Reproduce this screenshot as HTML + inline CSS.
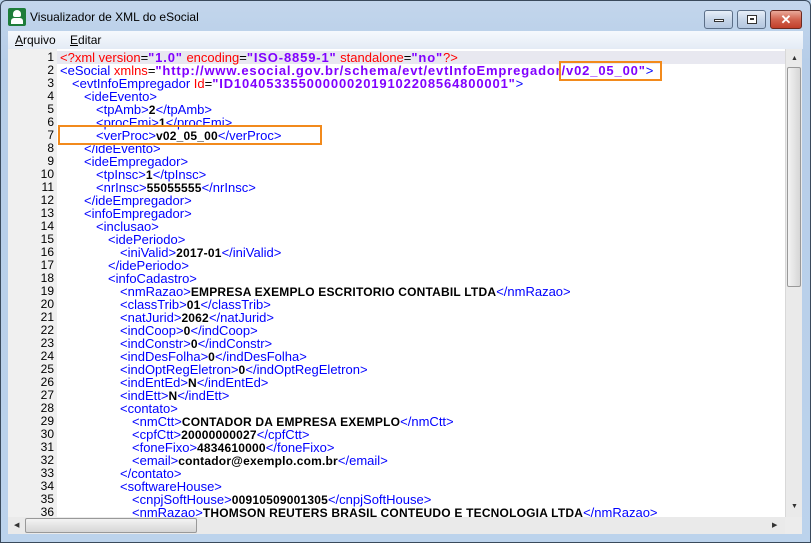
<!DOCTYPE html>
<html><head><meta charset="utf-8"><style>
*{margin:0;padding:0;box-sizing:border-box}
body{width:811px;height:543px;overflow:hidden;background:#b9d1ea;font-family:"Liberation Sans",Tahoma,sans-serif;position:relative}
.frame{position:absolute;left:0;top:0;width:811px;height:543px;background:linear-gradient(#c3d6ec,#b6cde8 60px,#bcd3ec);border:1px solid #3a4a5c;border-radius:6px 6px 0 0}
.title{position:absolute;left:30px;top:10px;font-size:12px;color:#000}
.icon{position:absolute;left:8px;top:8px;width:18px;height:18px;background:#1e7d3a;border-radius:2px}
.icon:before{content:"";position:absolute;left:5px;top:2px;width:8px;height:7px;background:#fff;border-radius:4px 4px 2px 2px}
.icon:after{content:"";position:absolute;left:3px;top:10px;width:12px;height:6px;background:#fff;border-radius:3px 3px 0 0}
.btn{position:absolute;top:10px;height:19px;border:1px solid #5c6f88;border-radius:3px;background:linear-gradient(#e6eef8,#c7d6e9 50%,#b3c6df)}
.close{background:linear-gradient(#e9a99a,#d2644f 50%,#c13f2a);border-color:#6d2a20;color:#fff;font-weight:bold;font-size:13px;text-align:center;line-height:17px}
.menu{position:absolute;left:8px;top:31px;width:795px;height:18px;background:linear-gradient(#f6f9fd,#e4ebf5);font-size:12px}
.menu span{position:absolute;top:2px}
.editor{position:absolute;left:8px;top:49px;width:777px;height:468px;background:#fff;overflow:hidden}
.gutter{position:absolute;left:0;top:0;width:49px;height:468px;background:#f0f0f0}
.cur{position:absolute;left:49px;top:2px;width:728px;height:13px;background:#e8e8f0}
.lines{position:absolute;left:0;top:2px;width:777px;font-size:13px;line-height:13px}
.ln{display:block;height:13px;position:relative;white-space:nowrap}
.n{position:absolute;left:0;width:46px;text-align:right;color:#000;font-size:12px}
.c{position:absolute;left:52px;white-space:pre}
.l1{left:64px}.l2{left:76px}.l3{left:88px}.l4{left:100px}.l5{left:112px}.l6{left:124px}
.t{color:#0000ff}.a{color:#ff0000}.v{color:#8000ff;font-weight:bold;letter-spacing:0.85px}.x{color:#000;font-weight:bold;font-size:12px;letter-spacing:0.2px}
.vs{position:absolute;left:785px;top:49px;width:17px;height:468px;background:#eaeaea;border-left:1px solid #d8d8d8}
.hs{position:absolute;left:8px;top:517px;width:777px;height:17px;background:#eaeaea}
.corner{position:absolute;left:785px;top:517px;width:17px;height:17px;background:#ececec}
.box{position:absolute;border:2px solid #f28a1c}
</style></head><body>
<div class="frame"></div>
<div class="icon"></div>
<div class="title">Visualizador de XML do eSocial</div>
<div class="btn" style="left:704px;width:29px"><div style="position:absolute;left:9px;top:8px;width:10px;height:3px;background:#fff;border:1px solid #333"></div></div>
<div class="btn" style="left:737px;width:29px"><div style="position:absolute;left:9px;top:4px;width:10px;height:9px;border:1px solid #333;background:#fff"><div style="margin:2px;height:2px;background:#333"></div></div></div>
<div class="btn close" style="left:770px;width:32px">✕</div>
<div class="menu"><span style="left:7px"><u>A</u>rquivo</span><span style="left:62px"><u>E</u>ditar</span></div>
<div class="editor">
<div class="gutter"></div>
<div class="cur"></div>
<div class="lines">
<div class="ln"><span class="n">1</span><span class="c"><span class="a">&lt;?xml version</span>=<span class="v">"1.0"</span> <span class="a">encoding</span>=<span class="v">"ISO-8859-1"</span> <span class="a">standalone</span>=<span class="v">"no"</span><span class="a">?&gt;</span></span></div>
<div class="ln"><span class="n">2</span><span class="c"><span class="t">&lt;eSocial</span> <span class="a">xmlns</span>=<span class="v">"http://www.esocial.gov.br/schema/evt/evtInfoEmpregador/v02_05_00"</span><span class="t">&gt;</span></span></div>
<div class="ln"><span class="n">3</span><span class="c l1"><span class="t">&lt;evtInfoEmpregador</span> <span class="a">Id</span>=<span class="v">"ID1040533550000002019102208564800001"</span><span class="t">&gt;</span></span></div>
<div class="ln"><span class="n">4</span><span class="c l2"><span class="t">&lt;ideEvento&gt;</span></span></div>
<div class="ln"><span class="n">5</span><span class="c l3"><span class="t">&lt;tpAmb&gt;</span><span class="x">2</span><span class="t">&lt;/tpAmb&gt;</span></span></div>
<div class="ln"><span class="n">6</span><span class="c l3"><span class="t">&lt;procEmi&gt;</span><span class="x">1</span><span class="t">&lt;/procEmi&gt;</span></span></div>
<div class="ln"><span class="n">7</span><span class="c l3"><span class="t">&lt;verProc&gt;</span><span class="x">v02_05_00</span><span class="t">&lt;/verProc&gt;</span></span></div>
<div class="ln"><span class="n">8</span><span class="c l2"><span class="t">&lt;/ideEvento&gt;</span></span></div>
<div class="ln"><span class="n">9</span><span class="c l2"><span class="t">&lt;ideEmpregador&gt;</span></span></div>
<div class="ln"><span class="n">10</span><span class="c l3"><span class="t">&lt;tpInsc&gt;</span><span class="x">1</span><span class="t">&lt;/tpInsc&gt;</span></span></div>
<div class="ln"><span class="n">11</span><span class="c l3"><span class="t">&lt;nrInsc&gt;</span><span class="x">55055555</span><span class="t">&lt;/nrInsc&gt;</span></span></div>
<div class="ln"><span class="n">12</span><span class="c l2"><span class="t">&lt;/ideEmpregador&gt;</span></span></div>
<div class="ln"><span class="n">13</span><span class="c l2"><span class="t">&lt;infoEmpregador&gt;</span></span></div>
<div class="ln"><span class="n">14</span><span class="c l3"><span class="t">&lt;inclusao&gt;</span></span></div>
<div class="ln"><span class="n">15</span><span class="c l4"><span class="t">&lt;idePeriodo&gt;</span></span></div>
<div class="ln"><span class="n">16</span><span class="c l5"><span class="t">&lt;iniValid&gt;</span><span class="x">2017-01</span><span class="t">&lt;/iniValid&gt;</span></span></div>
<div class="ln"><span class="n">17</span><span class="c l4"><span class="t">&lt;/idePeriodo&gt;</span></span></div>
<div class="ln"><span class="n">18</span><span class="c l4"><span class="t">&lt;infoCadastro&gt;</span></span></div>
<div class="ln"><span class="n">19</span><span class="c l5"><span class="t">&lt;nmRazao&gt;</span><span class="x">EMPRESA EXEMPLO ESCRITORIO CONTABIL LTDA</span><span class="t">&lt;/nmRazao&gt;</span></span></div>
<div class="ln"><span class="n">20</span><span class="c l5"><span class="t">&lt;classTrib&gt;</span><span class="x">01</span><span class="t">&lt;/classTrib&gt;</span></span></div>
<div class="ln"><span class="n">21</span><span class="c l5"><span class="t">&lt;natJurid&gt;</span><span class="x">2062</span><span class="t">&lt;/natJurid&gt;</span></span></div>
<div class="ln"><span class="n">22</span><span class="c l5"><span class="t">&lt;indCoop&gt;</span><span class="x">0</span><span class="t">&lt;/indCoop&gt;</span></span></div>
<div class="ln"><span class="n">23</span><span class="c l5"><span class="t">&lt;indConstr&gt;</span><span class="x">0</span><span class="t">&lt;/indConstr&gt;</span></span></div>
<div class="ln"><span class="n">24</span><span class="c l5"><span class="t">&lt;indDesFolha&gt;</span><span class="x">0</span><span class="t">&lt;/indDesFolha&gt;</span></span></div>
<div class="ln"><span class="n">25</span><span class="c l5"><span class="t">&lt;indOptRegEletron&gt;</span><span class="x">0</span><span class="t">&lt;/indOptRegEletron&gt;</span></span></div>
<div class="ln"><span class="n">26</span><span class="c l5"><span class="t">&lt;indEntEd&gt;</span><span class="x">N</span><span class="t">&lt;/indEntEd&gt;</span></span></div>
<div class="ln"><span class="n">27</span><span class="c l5"><span class="t">&lt;indEtt&gt;</span><span class="x">N</span><span class="t">&lt;/indEtt&gt;</span></span></div>
<div class="ln"><span class="n">28</span><span class="c l5"><span class="t">&lt;contato&gt;</span></span></div>
<div class="ln"><span class="n">29</span><span class="c l6"><span class="t">&lt;nmCtt&gt;</span><span class="x">CONTADOR DA EMPRESA EXEMPLO</span><span class="t">&lt;/nmCtt&gt;</span></span></div>
<div class="ln"><span class="n">30</span><span class="c l6"><span class="t">&lt;cpfCtt&gt;</span><span class="x">20000000027</span><span class="t">&lt;/cpfCtt&gt;</span></span></div>
<div class="ln"><span class="n">31</span><span class="c l6"><span class="t">&lt;foneFixo&gt;</span><span class="x">4834610000</span><span class="t">&lt;/foneFixo&gt;</span></span></div>
<div class="ln"><span class="n">32</span><span class="c l6"><span class="t">&lt;email&gt;</span><span class="x">contador@exemplo.com.br</span><span class="t">&lt;/email&gt;</span></span></div>
<div class="ln"><span class="n">33</span><span class="c l5"><span class="t">&lt;/contato&gt;</span></span></div>
<div class="ln"><span class="n">34</span><span class="c l5"><span class="t">&lt;softwareHouse&gt;</span></span></div>
<div class="ln"><span class="n">35</span><span class="c l6"><span class="t">&lt;cnpjSoftHouse&gt;</span><span class="x">00910509001305</span><span class="t">&lt;/cnpjSoftHouse&gt;</span></span></div>
<div class="ln"><span class="n">36</span><span class="c l6"><span class="t">&lt;nmRazao&gt;</span><span class="x">THOMSON REUTERS BRASIL CONTEUDO E TECNOLOGIA LTDA</span><span class="t">&lt;/nmRazao&gt;</span></span></div>
</div>
</div>
<div class="vs">
<div style="position:absolute;left:5px;top:6px;font-size:7px;color:#333">▲</div>
<div style="position:absolute;left:1px;top:18px;width:14px;height:220px;border:1px solid #999;border-radius:2px;background:linear-gradient(90deg,#f3f3f3,#d6d6d6)"></div>
<div style="position:absolute;left:5px;top:454px;font-size:7px;color:#333">▼</div>
</div>
<div class="hs">
<div style="position:absolute;left:6px;top:4px;font-size:7px;color:#333">◀</div>
<div style="position:absolute;left:17px;top:1px;width:172px;height:15px;border:1px solid #999;border-radius:2px;background:linear-gradient(#f3f3f3,#d6d6d6)"></div>
<div style="position:absolute;left:764px;top:4px;font-size:7px;color:#333">▶</div>
</div>
<div class="corner"></div>
<div class="box" style="left:559px;top:61px;width:103px;height:20px"></div>
<div class="box" style="left:58px;top:125px;width:264px;height:20px"></div>
</body></html>
